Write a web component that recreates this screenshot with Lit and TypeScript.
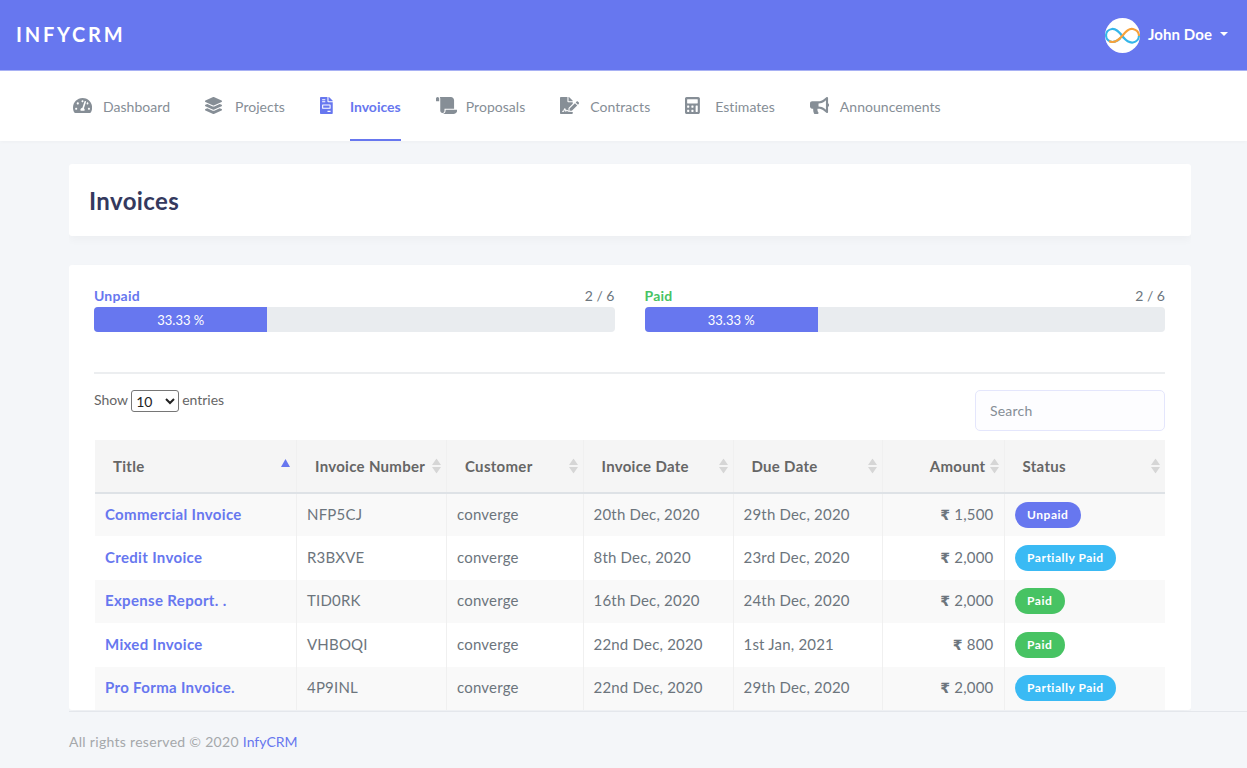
import { LitElement, html, css, svg } from "lit";
import { customElement } from "lit/decorators.js";

const ICONS: Record<string, [number, string]> = {
  dash: [576, "M288 32C128.94 32 0 160.94 0 320c0 52.8 14.25 102.26 39.06 144.8 5.61 9.62 16.3 15.2 27.44 15.2h443c11.14 0 21.83-5.58 27.44-15.2C561.75 422.26 576 372.8 576 320c0-159.06-128.94-288-288-288zm0 64c14.71 0 26.58 10.13 30.32 23.65-1.11 2.26-2.64 4.23-3.45 6.67l-9.22 27.67c-5.13 3.49-10.97 6.01-17.64 6.01-17.67 0-32-14.33-32-32S270.33 96 288 96zM96 384c-17.67 0-32-14.33-32-32s14.33-32 32-32 32 14.33 32 32-14.33 32-32 32zm48-160c-17.67 0-32-14.33-32-32s14.33-32 32-32 32 14.33 32 32-14.33 32-32 32zm246.77-72.41l-61.33 184C343.13 347.33 352 364.54 352 384c0 11.72-3.38 22.55-8.88 32H232.88c-5.5-9.45-8.88-20.28-8.88-32 0-33.94 26.5-61.43 59.9-63.59l61.34-184.01c4.17-12.56 17.73-19.45 30.36-15.17 12.57 4.19 19.35 17.79 15.17 30.36zm14.66 57.2l15.52-46.55c3.47-1.29 7.13-2.23 11.05-2.23 17.67 0 32 14.33 32 32s-14.33 32-32 32c-11.38-.01-20.89-6.28-26.57-15.22zM480 384c-17.67 0-32-14.33-32-32s14.33-32 32-32 32 14.33 32 32-14.33 32-32 32z"],
  layers: [512, "M12.41 148.02l232.94 105.67c6.8 3.09 14.49 3.09 21.29 0l232.94-105.67c16.55-7.51 16.55-32.52 0-40.03L266.65 2.31a25.607 25.607 0 0 0-21.29 0L12.41 107.98c-16.55 7.51-16.55 32.53 0 40.04zm487.18 88.28l-58.09-26.33-161.64 73.27c-7.56 3.43-15.59 5.17-23.86 5.17s-16.29-1.74-23.86-5.17L70.51 209.97l-58.1 26.33c-16.55 7.5-16.55 32.5 0 40l232.94 105.59c6.8 3.08 14.49 3.08 21.29 0L499.59 276.3c16.55-7.5 16.55-32.5 0-40zm0 127.8l-57.87-26.23-161.86 73.37c-7.56 3.43-15.59 5.17-23.86 5.17s-16.29-1.74-23.86-5.17L70.29 337.87 12.41 364.1c-16.55 7.5-16.55 32.5 0 40l232.94 105.59c6.8 3.08 14.49 3.08 21.29 0L499.59 404.1c16.55-7.5 16.55-32.5 0-40z"],
  invoice: [384, "M288 256H96v64h192v-64zm89-151L279.1 7c-4.5-4.5-10.6-7-17-7H256v128h128v-6.1c0-6.3-2.5-12.4-7-16.9zm-153 31V0H24C10.7 0 0 10.7 0 24v464c0 13.3 10.7 24 24 24h336c13.3 0 24-10.7 24-24V160H248c-13.2 0-24-10.8-24-24zM64 72c0-4.42 3.58-8 8-8h80c4.42 0 8 3.58 8 8v16c0 4.42-3.58 8-8 8H72c-4.42 0-8-3.58-8-8V72zm0 64c0-4.42 3.58-8 8-8h80c4.42 0 8 3.58 8 8v16c0 4.42-3.58 8-8 8H72c-4.42 0-8-3.58-8-8v-16zm256 304c0 4.42-3.58 8-8 8h-80c-4.42 0-8-3.58-8-8v-16c0-4.42 3.58-8 8-8h80c4.42 0 8 3.58 8 8v16zm0-200v96c0 8.84-7.16 16-16 16H80c-8.84 0-16-7.16-16-16v-96c0-8.84 7.16-16 16-16h224c8.84 0 16 7.16 16 16z"],
  scroll: [640, "M48 0C21.53 0 0 21.53 0 48v64c0 8.84 7.16 16 16 16h80V48C96 21.53 74.47 0 48 0zm208 412.57V352h288V96c0-52.94-43.06-96-96-96H111.59C121.74 13.41 128 29.92 128 48v368c0 38.87 34.65 69.65 74.75 63.12C234.22 474 256 444.46 256 412.57zM288 384v32c0 52.93-43.06 96-96 96h336c61.86 0 112-50.14 112-112 0-8.84-7.16-16-16-16H288z"],
  sign: [576, "M218.17 424.14c-2.95-5.92-8.09-6.52-10.17-6.52s-7.22.59-10.02 6.19l-7.67 15.34c-6.37 12.78-25.03 11.37-29.48-2.09L144 386.59l-10.61 31.88c-5.89 17.66-22.38 29.53-41 29.53H80c-8.84 0-16-7.16-16-16s7.16-16 16-16h12.39c4.83 0 9.11-3.08 10.64-7.66l18.19-54.64c3.3-9.81 12.44-16.41 22.78-16.41s19.48 6.59 22.77 16.41l13.88 41.64c19.75-16.19 54.06-9.7 66 14.16 1.89 3.78 5.49 5.95 9.36 6.26v-82.12l128-127.09V160H248c-13.2 0-24-10.8-24-24V0H24C10.7 0 0 10.7 0 24v464c0 13.3 10.7 24 24 24h336c13.3 0 24-10.7 24-24v-40l-128-.11c-16.12-.31-30.58-9.08-37.83-23.75zM384 121.9c0-6.3-2.5-12.4-7-16.9L279.1 7c-4.5-4.5-10.6-7-17-7H256v128h128v-6.1zm-96 225.06V416h68.99l161.68-162.78-67.88-67.88L288 346.96zm280.54-179.63l-31.87-31.87c-9.94-9.94-26.07-9.94-36.01 0l-27.25 27.25 67.88 67.88 27.25-27.25c9.95-9.94 9.95-26.07 0-36.01z"],
  calc: [448, "M400 0H48C22.4 0 0 22.4 0 48v416c0 25.6 22.4 48 48 48h352c25.6 0 48-22.4 48-48V48c0-25.6-22.4-48-48-48zM128 435.2c0 6.4-6.4 12.8-12.8 12.8H76.8c-6.4 0-12.8-6.4-12.8-12.8v-38.4c0-6.4 6.4-12.8 12.8-12.8h38.4c6.4 0 12.8 6.4 12.8 12.8v38.4zm0-128c0 6.4-6.4 12.8-12.8 12.8H76.8c-6.4 0-12.8-6.4-12.8-12.8v-38.4c0-6.4 6.4-12.8 12.8-12.8h38.4c6.4 0 12.8 6.4 12.8 12.8v38.4zm128 128c0 6.4-6.4 12.8-12.8 12.8h-38.4c-6.4 0-12.8-6.4-12.8-12.8v-38.4c0-6.4 6.4-12.8 12.8-12.8h38.4c6.4 0 12.8 6.4 12.8 12.8v38.4zm0-128c0 6.4-6.4 12.8-12.8 12.8h-38.4c-6.4 0-12.8-6.4-12.8-12.8v-38.4c0-6.4 6.4-12.8 12.8-12.8h38.4c6.4 0 12.8 6.4 12.8 12.8v38.4zm128 128c0 6.4-6.4 12.8-12.8 12.8h-38.4c-6.4 0-12.8-6.4-12.8-12.8V268.8c0-6.4 6.4-12.8 12.8-12.8h38.4c6.4 0 12.8 6.4 12.8 12.8v166.4zm0-256c0 6.4-6.4 12.8-12.8 12.8H76.8c-6.4 0-12.8-6.4-12.8-12.8V76.8C64 70.4 70.4 64 76.8 64h294.4c6.4 0 12.8 6.4 12.8 12.8v102.4z"],
  horn: [576, "M576 240c0-23.63-12.95-44.04-32-55.12V32.01C544 23.26 537.02 0 512 0c-7.12 0-14.19 2.38-19.98 7.02l-85.03 68.03C364.28 109.19 310.66 128 256 128H64c-35.35 0-64 28.65-64 64v96c0 35.35 28.65 64 64 64h33.7c-1.39 10.48-2.18 21.14-2.18 32 0 39.77 9.26 77.35 25.56 110.94 5.19 10.69 16.52 17.06 28.4 17.06h74.28c26.05 0 41.69-29.84 25.9-50.56-16.4-21.52-26.15-48.36-26.15-77.44 0-11.11 1.62-21.79 4.41-32H256c54.66 0 108.28 18.81 150.98 52.95l85.03 68.03a32.023 32.023 0 0 0 19.98 7.02c24.92 0 32-22.78 32-32V295.13C563.05 284.04 576 263.63 576 240zm-96 141.42l-33.05-26.44C392.95 311.78 325.12 288 256 288v-96c69.12 0 136.95-23.78 190.95-66.98L480 98.58v282.84z"],
};

const NAV = [
  { label: "Dashboard", icon: "dash" },
  { label: "Projects", icon: "layers" },
  { label: "Invoices", icon: "invoice", active: true },
  { label: "Proposals", icon: "scroll" },
  { label: "Contracts", icon: "sign" },
  { label: "Estimates", icon: "calc" },
  { label: "Announcements", icon: "horn" },
];

const COLS = [
  { label: "Title", w: 201.5, sorted: true },
  { label: "Invoice Number", w: 150 },
  { label: "Customer", w: 136.5 },
  { label: "Invoice Date", w: 150 },
  { label: "Due Date", w: 149 },
  { label: "Amount", w: 122, right: true },
  { label: "Status", w: 161 },
];

const ROWS = [
  ["Commercial Invoice", "NFP5CJ", "20th Dec, 2020", "29th Dec, 2020", "1,500", "Unpaid"],
  ["Credit Invoice", "R3BXVE", "8th Dec, 2020", "23rd Dec, 2020", "2,000", "Partially Paid"],
  ["Expense Report. .", "TID0RK", "16th Dec, 2020", "24th Dec, 2020", "2,000", "Paid"],
  ["Mixed Invoice", "VHBOQI", "22nd Dec, 2020", "1st Jan, 2021", "800", "Paid"],
  ["Pro Forma Invoice.", "4P9INL", "22nd Dec, 2020", "29th Dec, 2020", "2,000", "Partially Paid"],
];

const BADGE: Record<string, string> = { Unpaid: "unpaid", "Partially Paid": "partial", Paid: "paid" };

@customElement("app-root")
export class AppRoot extends LitElement {
  static styles = css`
    :host { display: block; font-family: "Lato", "Noto Sans", sans-serif; color: #6c757d; }
    * { box-sizing: border-box; }
    .page { height: 768px; display: flex; flex-direction: column; background: #f4f6f9; overflow: hidden; }
    .top { flex: 0 0 71px; height: 71px; background: #6777ef; border-bottom: 1px solid #a9b2f5; display: flex; align-items: center; justify-content: space-between; padding: 0 19px 3px 16px; }
    .brand { color: #fff; font-size: 20px; font-weight: 700; letter-spacing: 2.8px; }
    .user { display: flex; align-items: center; color: #fff; font-size: 15px; font-weight: 700; letter-spacing: .1px; }
    .avatar { width: 35px; height: 35px; border-radius: 50%; background: #fff; margin: 4px 8px 0 0; display: block; }
    .caret { width: 0; height: 0; margin-left: 8px; border-left: 4.5px solid transparent; border-right: 4.5px solid transparent; border-top: 4.5px solid #fff; }
    .nav { flex: 0 0 70px; height: 70px; background: #fff; display: flex; padding-left: 73px; gap: 35px; box-shadow: 0 1px 4px rgba(0,0,0,.03); position: relative; }
    .item { display: flex; align-items: center; font-size: 14px; letter-spacing: .04px; color: #868e96; }
    .ico { width: 30px; display: flex; align-items: center; flex: none; height: 17px; position: relative; top: -1px; }
    .ico svg { height: 17px; display: block; fill: #868e96; }
    .lbl { height: 70px; display: flex; align-items: center; border-bottom: 2px solid transparent; padding-top: 2px; }
    .item.active { color: #6777ef; font-weight: 700; letter-spacing: 0; }
    .item.active svg { fill: #6777ef; }
    .item.active .lbl { border-bottom-color: #6777ef; }
    .main { flex: 1 1 0; min-height: 0; overflow: hidden; margin: 0 56px 0 69px; padding-top: 23px; display: flex; flex-direction: column; gap: 29px; }
    .card { background: #fff; border-radius: 3px; box-shadow: 0 4px 8px rgba(0,0,0,.03); }
    .head { flex: none; height: 72px; display: flex; align-items: center; padding-left: 20px; }
    h1 { margin: 0; font-size: 24px; font-weight: 700; color: #34395e; letter-spacing: .4px; }
    .body { flex: none; padding: 21px 26px 0 25px; }
    .bars { display: grid; grid-template-columns: 1fr 1fr; gap: 30px; }
    .barhead { display: flex; justify-content: space-between; font-size: 14px; line-height: 20px; height: 21px; }
    .barhead b { font-weight: 700; letter-spacing: .2px; }
    .u { color: #6777ef; } .p { color: #47c363; }
    .track { height: 25px; background: #e9ecef; border-radius: 4px; overflow: hidden; }
    .fill { height: 100%; background: #6777ef; color: #fff; font-size: 13px; display: flex; align-items: center; justify-content: center; }
    hr { border: 0; border-top: 2px solid #eceef0; margin: 40px 0 0 0; }
    .tools { display: flex; justify-content: space-between; align-items: flex-start; padding: 16px 0 0 0; height: 66px; }
    .show { display: flex; align-items: center; gap: 3px; font-size: 14px; color: #666; height: 22px; margin-top: -2px; }
    select { width: 48px; height: 22px; font: 14px "Lato", sans-serif; color: #222; background: #fff; border: 1px solid #767676; border-radius: 3px; padding: 0; position: relative; top: 2px; }
    input { width: 190px; height: 41px; border: 1px solid #e4e6fc; border-radius: 5px; background: #fdfdff; padding: 0 14px 1px; font: 14px "Lato", sans-serif; letter-spacing: .2px; outline: none; }
    input::placeholder { color: #868e96; opacity: 1; }
    table { border-collapse: collapse; table-layout: fixed; width: 1070px; margin-left: 1px; font-size: 15px; letter-spacing: .2px; }
    th { position: relative; height: 53px; background: #f5f5f5; color: #666; font-size: 15px; font-weight: 700; letter-spacing: .3px; text-align: left; padding: 0 18px 1px; border-left: 1px solid #f0f0f0; border-bottom: 2px solid #dee2e6; }
    th.r { text-align: right; }
    .sort { position: absolute; right: 5px; top: 50%; transform: translateY(-50%); width: 9px; height: 15px; display: block; }
    .sort.asc { right: 6px; top: 19px; height: 8px; transform: none; }
    td { height: 43.4px; padding: 0 10px 2px; border-left: 1px solid #f0f0f0; color: #6c757d; white-space: nowrap; }
    th:first-child, td:first-child { border-left: 0; }
    tr:nth-child(odd) td { background: #f9f9f9; }
    td.r { text-align: right; }
    .link { color: #6777ef; font-weight: 700; letter-spacing: .33px; }
    .rs { font-family: "DejaVu Sans", sans-serif; font-weight: 700; font-size: 14px; }
    .badge { display: inline-block; margin-top: 2px; padding: 0 12.6px; height: 26px; line-height: 26px; border-radius: 13px; color: #fff; font-size: 12px; font-weight: 700; letter-spacing: .5px; }
    .unpaid { background: #6777ef; } .partial { background: #3abaf4; } .paid { background: #47c363; }
    .foot { flex: 0 0 57px; height: 57px; margin-left: 69px; border-top: 1px solid #e4e7ec; background: #f4f6f9; font-size: 14px; color: #a5a8ab; display: flex; align-items: center; padding-top: 3px; z-index: 1; letter-spacing: .3px; }
    .foot span { color: #6777ef; margin-left: 4px; letter-spacing: 0; }
  `;

  private icon(name: string) {
    const [w, d] = ICONS[name];
    return html`<svg viewBox="0 0 ${w} 512">${svg`<path d=${d}></path>`}</svg>`;
  }

  render() {
    return html`
      <div class="page">
        <div class="top">
          <div class="brand">INFYCRM</div>
          <div class="user">
            <svg class="avatar" viewBox="0 0 35 35" fill="none">
              <path d="M18 19C14 13.5 11 10.5 7 11C3 11.5 1 14.5 1 17.5C1 21 4 24 7.5 24C10.5 24 13 22.5 15 20.5" stroke="#35b6ea" stroke-width="2.2" stroke-linecap="round"></path>
              <path d="M18 19C21 22.5 24.5 25 28 24.5C31.5 24 34 21 34 17.5" stroke="#35b6ea" stroke-width="2.2" stroke-linecap="round"></path>
              <path d="M5 23.5C10 25.5 14 22 18 17C21 13 24 10 28 11C31 11.7 33.5 14 34 17" stroke="#f7a23b" stroke-width="2.2" stroke-linecap="round"></path>
            </svg>
            John Doe<span class="caret"></span>
          </div>
        </div>
        <div class="nav">
          ${NAV.map(n => html`<div class="item ${n.active ? "active" : ""}"><span class="ico">${this.icon(n.icon)}</span><span class="lbl">${n.label}</span></div>`)}
        </div>
        <div class="main">
          <div class="card head"><h1>Invoices</h1></div>
          <div class="card body">
            <div class="bars">
              <div><div class="barhead"><b class="u">Unpaid</b><span>2 / 6</span></div><div class="track"><div class="fill" style="width:33.33%">33.33 %</div></div></div>
              <div><div class="barhead"><b class="p">Paid</b><span>2 / 6</span></div><div class="track"><div class="fill" style="width:33.33%">33.33 %</div></div></div>
            </div>
            <hr />
            <div class="tools">
              <div class="show">Show <select><option>10</option></select> entries</div>
              <input placeholder="Search" />
            </div>
            <table>
              <colgroup>${COLS.map(c => html`<col style="width:${c.w}px" />`)}</colgroup>
              <thead><tr>
                ${COLS.map(c => html`<th class=${c.right ? "r" : ""}>${c.label}${c.sorted
                  ? html`<svg class="sort asc" viewBox="0 0 9 8"><path d="M4.5 0L9 8H0z" fill="#6777ef"></path></svg>`
                  : html`<svg class="sort" viewBox="0 0 9 15"><path d="M4.5 0L9 6.5H0zM4.5 15L0 8.5H9z" fill="#d6d6d6"></path></svg>`}</th>`)}
              </tr></thead>
              <tbody>
                ${ROWS.map(r => html`<tr>
                  <td class="link">${r[0]}</td><td>${r[1]}</td><td>converge</td><td>${r[2]}</td><td>${r[3]}</td>
                  <td class="r"><span class="rs">₹</span> ${r[4]}</td>
                  <td><span class="badge ${BADGE[r[5]]}">${r[5]}</span></td>
                </tr>`)}
              </tbody>
            </table>
          </div>
        </div>
        <div class="foot">All rights reserved © 2020 <span>InfyCRM</span></div>
      </div>
    `;
  }
}
